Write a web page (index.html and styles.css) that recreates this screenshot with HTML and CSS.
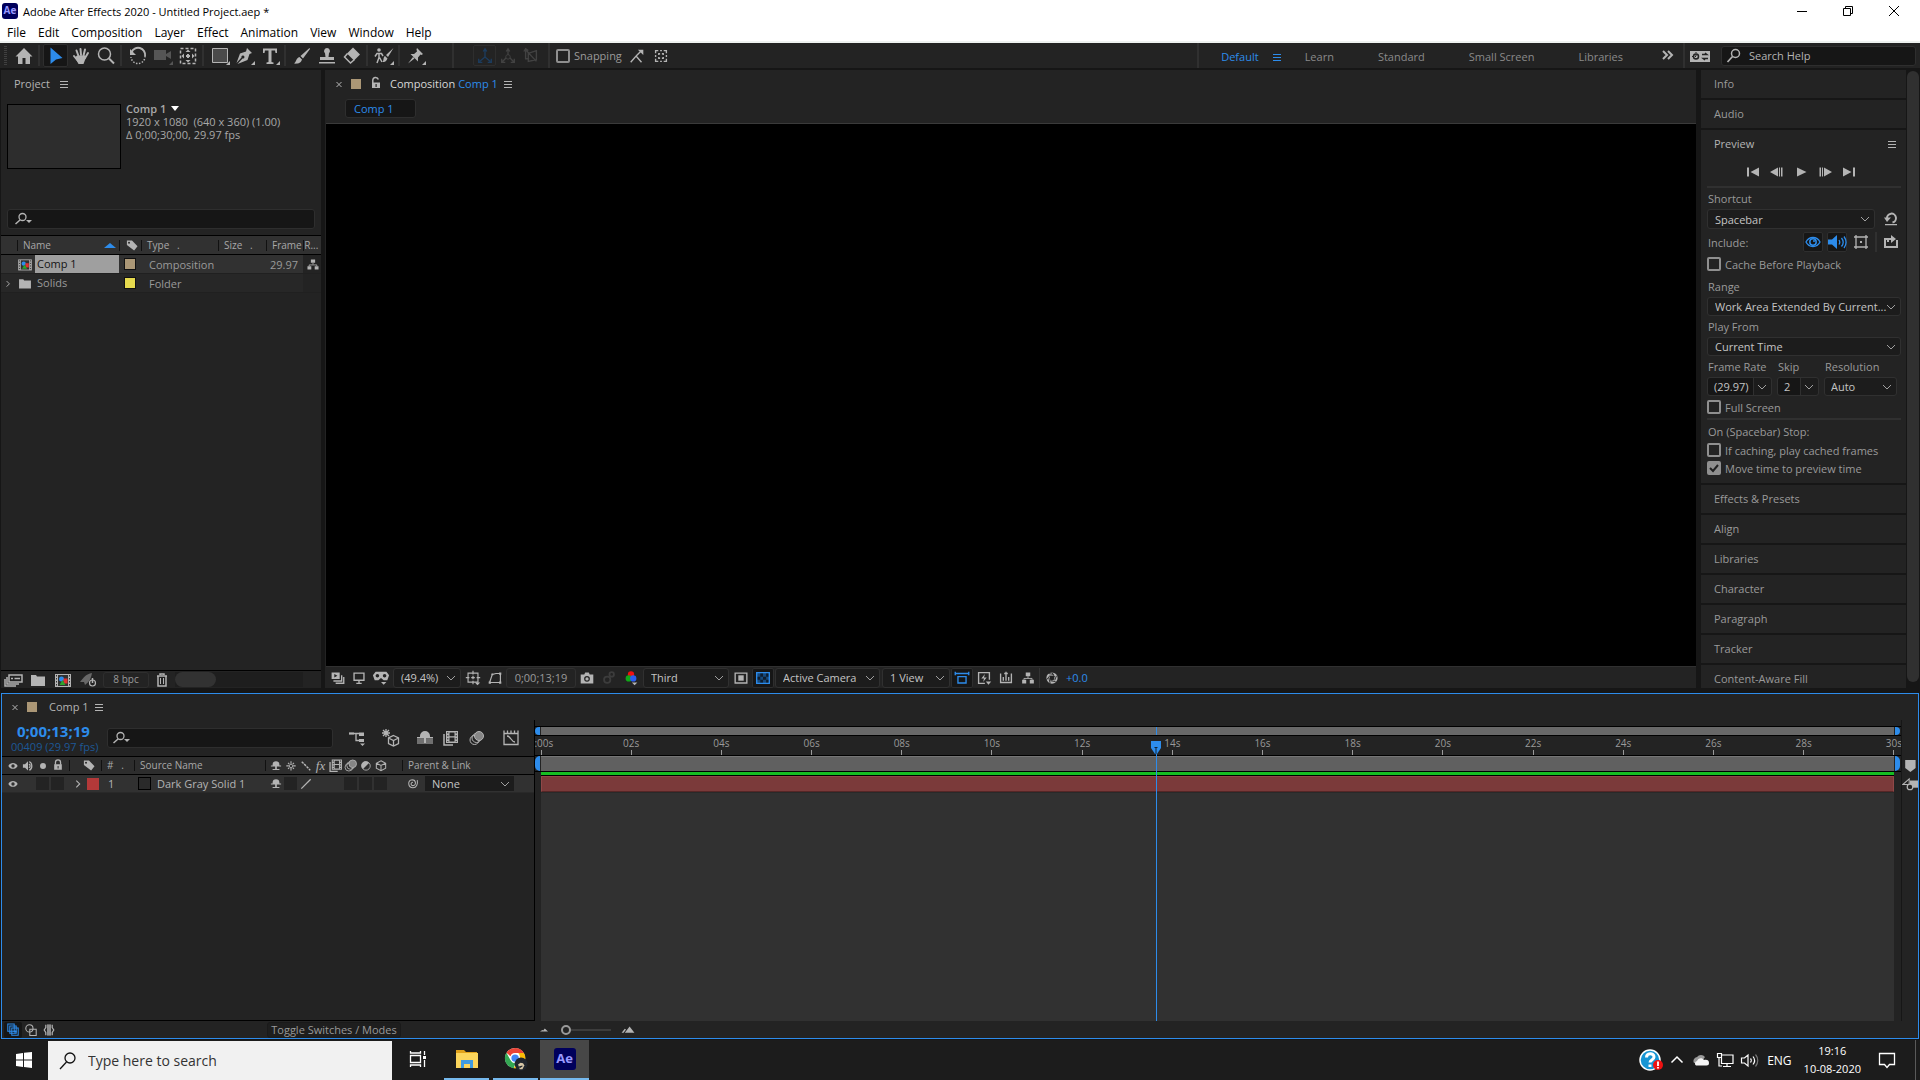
FILE: index.html
```html
<!DOCTYPE html>
<html lang="en">
<head>
    <meta charset="utf-8">
    <title>Adobe After Effects 2020 - Untitled Project.aep *</title>
    <link rel="stylesheet" href="styles.css">
</head>
<body>
    <svg class="sprite" aria-hidden="true">
        <!-- tools -->
        <symbol id="home" viewBox="0 0 20 20"><path fill="currentColor" d="M10 2 1.500 10.500H4V18h4.500v-6h3v6H16v-7.500h2.500z"/></symbol>
        <symbol id="arrow" viewBox="0 0 20 20"><path fill="currentColor" d="M4.500 1.500 16.500 12 10 13.500 4.500 18z"/></symbol>
        <symbol id="hand" viewBox="0 0 20 20"><path fill="none" stroke="currentColor" stroke-width="2" stroke-linecap="round" d="M7.500 10 5.500 4.500M10 9 9.500 3M12.500 9.500 14 3.500M14 12l3-5M3 10l4 5"/><path fill="currentColor" d="M6 9.500h8l1 2-2.500 6.500h-5L4 11.500z"/></symbol>
        <symbol id="zoom" viewBox="0 0 20 20"><circle cx="8.500" cy="8" r="6" fill="none" stroke="currentColor" stroke-width="1.500"/><path stroke="currentColor" stroke-width="2" d="m13 12.500 5 5"/></symbol>
        <symbol id="rotate" viewBox="0 0 20 20"><path fill="none" stroke="currentColor" stroke-width="2" d="M3.500 6.500A7 7 0 0 1 17 10"/><path fill="none" stroke="currentColor" stroke-width="1.500" stroke-dasharray="1.500 1.500" d="M17 10a7 7 0 0 1-14 1"/><path fill="currentColor" d="M2 3v6h6z"/></symbol>
        <symbol id="camera" viewBox="0 0 20 20"><path fill="currentColor" d="M1 4h12v4l5-3v8l-5-3v4H1zM20 15v4h-4z"/></symbol>
        <symbol id="anchor" viewBox="0 0 20 20"><path fill="none" stroke="currentColor" stroke-width="1.500" stroke-dasharray="3 2" d="M2.500 2.500h15v15h-15z"/><path fill="currentColor" d="m10 3.500 2.500 2.500h-5zM10 16.500l2.500-2.500h-5zM3.500 10 6 7.500v5zM16.500 10 14 7.500v5zM9 8h2v1h1v2h-1v1H9v-1H8V9h1z"/></symbol>
        <symbol id="rect" viewBox="0 0 20 20"><path fill="#4a4a4a" stroke="currentColor" d="M2.500 2.500h15v14h-15z"/><path fill="currentColor" d="M20 15v4h-4z"/></symbol>
        <symbol id="pen" viewBox="0 0 20 20"><path fill="currentColor" fill-rule="evenodd" d="m12 2 5 5-2.500 1-2 6L2.500 18l5-5.500a1.500 1.500 0 1 0-1-1L1.500 17 5 7.500l6-2z"/><path fill="currentColor" d="M20 15v4h-4z"/></symbol>
        <symbol id="type" viewBox="0 0 20 20"><path fill="currentColor" d="M3 2.500h14V7h-1.500L15 4.500h-3.500V16l2 .5V18h-7v-1.500l2-.5V4.500H5L4.500 7H3zM20 15v4h-4z"/></symbol>
        <symbol id="brush" viewBox="0 0 20 20"><path fill="currentColor" d="m17.500 2-9 8 2.500 2.500 7-9.500zM7.500 11l2.500 2.500c-1 4-5 4.500-8 4 2.500-1.500 2-5.500 5.500-6.500z"/></symbol>
        <symbol id="stamp" viewBox="0 0 20 20"><path fill="currentColor" d="M10 2a3 3 0 0 1 2 5.200L11.500 11H17v3H3v-3h5.500L8 7.200A3 3 0 0 1 10 2zM2 16h16v1.500H2z"/></symbol>
        <symbol id="eraser" viewBox="0 0 20 20"><path fill="currentColor" d="m11 1.500 7 7-6 6-7-7z"/><path fill="none" stroke="currentColor" stroke-width="1.500" d="m5.500 7.500-3 3.500 6 6 4-3.500"/></symbol>
        <symbol id="roto" viewBox="0 0 20 20"><circle cx="5" cy="4" r="1.800" fill="currentColor"/><path fill="none" stroke="currentColor" stroke-width="1.500" d="M1 10.500 3 7.500h4.500L9 10M5 7v5M5 11.500l-2 5.500M5.500 11.500 8 16"/><path fill="currentColor" d="m19.500 2-7.500 7 2 2zM11 10l2.500 2.500c-1 3-3 3.500-5 3.500 1.500-1.500.5-5 2.500-6zM20 15v4h-4z"/></symbol>
        <symbol id="pin" viewBox="0 0 20 20"><path fill="currentColor" d="m11 2 6 6-1.500 1-1-.5-2.500 3v4L4.500 8H8l3-2.500-.5-2zM7 11l1.500 1.500L2 17.500z"/><path fill="currentColor" d="M20 15v4h-4z"/></symbol>
        <symbol id="axis" viewBox="0 0 20 20"><path fill="none" stroke="currentColor" stroke-width="1.500" d="M10 3v8l-6 5M10 11l6 5M8 5l2-3 2 3M3 13v4h4M17 13v4h-4"/></symbol>
        <symbol id="axis-world" viewBox="0 0 20 20"><path fill="none" stroke="currentColor" stroke-width="1.500" d="M10 3v6M8 12l-4 4M12 12l4 4M8 5l2-3 2 3M3 13v4h4M17 13v4h-4"/><circle cx="10" cy="11" r="2.500" fill="none" stroke="currentColor"/></symbol>
        <symbol id="axis-view" viewBox="0 0 20 20"><path fill="none" stroke="currentColor" stroke-width="1.500" d="M4 3v10h4M4 3l12 13M7 7l9-3v10l-9 2zM2 5l2-3 3 2"/></symbol>
        <symbol id="snap-line" viewBox="0 0 20 20"><path fill="none" stroke="currentColor" stroke-width="1.500" d="m3 17 6-7 6 7M9 10l5-5"/><path fill="currentColor" d="M11 3h6v6z"/></symbol>
        <symbol id="snap-box" viewBox="0 0 20 20"><path fill="none" stroke="currentColor" stroke-width="1.500" d="M4 7V4h3M13 4h3v3M16 13v3h-3M7 16H4v-3M9 4h2M9 16h2M4 9v2M16 9v2"/><path fill="none" stroke="currentColor" stroke-width="1.500" d="M7.500 9V7.500H9M11 7.500h1.500V9M12.500 11v1.500H11M9 12.500H7.500V11"/></symbol>
        <symbol id="menu" viewBox="0 0 20 20"><path stroke="currentColor" d="M6 7.500h8M6 10.500h8M6 13.500h8"/></symbol>
        <symbol id="more" viewBox="0 0 20 20"><path fill="none" stroke="currentColor" stroke-width="2" d="m5 5 4 4-4 4M10 5l4 4-4 4"/></symbol>
        <symbol id="sync" viewBox="0 0 20 20"><path fill="currentColor" d="M0 5h20v11H0z"/><circle cx="6" cy="10.500" r="2.500" fill="none" stroke="#232323" stroke-width="1.500"/><path stroke="#232323" stroke-dasharray="1 2" d="M2 10.500h8M6 6v9"/><path fill="none" stroke="#232323" stroke-width="1.300" d="M12 8.500h5l-2-1.500M18 12.500h-5l2 1.500"/></symbol>
        <symbol id="find" viewBox="0 0 20 20"><circle cx="11.500" cy="7.500" r="4" fill="none" stroke="currentColor" stroke-width="1.500"/><path stroke="currentColor" stroke-width="1.700" d="m8.500 10.500-5 5.500"/></symbol>
        <symbol id="find-menu" viewBox="0 0 20 20"><circle cx="10.500" cy="8" r="3.500" fill="none" stroke="currentColor" stroke-width="1.300"/><path stroke="currentColor" stroke-width="1.500" d="m8 11-4.500 4"/><path fill="currentColor" d="M14 11h6l-3 3z"/></symbol>
        <!-- panel icons -->
        <symbol id="close" viewBox="0 0 20 20"><path stroke="currentColor" d="m7.500 8 5 5M12.500 8l-5 5"/></symbol>
        <symbol id="lock-open" viewBox="0 0 20 20"><path fill="none" stroke="currentColor" stroke-width="1.500" d="M6.800 9V6a2.800 2.800 0 0 1 5.500-.5"/><path fill="currentColor" fill-rule="evenodd" d="M6 8.500h8V14H6zm3.500 1.500v3h1.200v-3z"/></symbol>
        <symbol id="lock" viewBox="0 0 20 20"><path fill="none" stroke="currentColor" stroke-width="1.500" d="M7 9V6.500a3 3 0 0 1 6 0V9"/><path fill="currentColor" fill-rule="evenodd" d="M5.500 8.500h9V15h-9zm4 2v3h1.200v-3z"/></symbol>
        <symbol id="comp" viewBox="0 0 20 20"><path fill="#b4b4b4" d="M2 4h16v13H2z"/><path fill="#303030" d="M5 5h10v11H5z"/><path stroke="#303030" stroke-dasharray="1.500 1.500" d="M3.500 5v11M16.500 5v11"/><circle cx="8.500" cy="9" r="2.500" fill="#2d8ceb"/><path fill="#e03030" d="M10.500 8.500h4v5h-4z"/><path fill="#2ca32c" d="m9.500 10 3 5h-6z"/></symbol>
        <symbol id="folder" viewBox="0 0 20 20"><path fill="currentColor" d="M3 5h5l1 1.500h8V16H3z"/></symbol>
        <symbol id="tag" viewBox="0 0 20 20"><path fill="currentColor" fill-rule="evenodd" d="M4 4h6l6.500 7-4 5L4 9.500zm2.500 1.500a1.200 1.200 0 1 0 0 2.400 1.200 1.200 0 0 0 0-2.400z"/></symbol>
        <symbol id="tree" viewBox="0 0 20 20"><path fill="currentColor" d="M7.500 4h5v4h-5zM3.500 12H8v4H3.500zM12 12h4.500v4H12z"/><path fill="none" stroke="currentColor" d="M10 8v2M5.500 12v-1.500h9V12"/></symbol>
        <symbol id="twirl" viewBox="0 0 20 20"><path fill="none" stroke="currentColor" stroke-width="1.300" d="m8 6.500 4 4-4 4"/></symbol>
        <symbol id="interpret" viewBox="0 0 20 20"><path fill="none" stroke="currentColor" stroke-width="1.500" d="M6 5h13v7H6zM4 7v7h12M2 9v7h11"/><path stroke="currentColor" stroke-width="1.500" d="M8 8.500h2M11.500 8.500H17"/></symbol>
        <symbol id="rocket" viewBox="0 0 20 20"><path fill="#686868" d="M2 12c4-5 6-8 12-9-1 6-3 9-7 12l-1-3z"/><circle cx="14.500" cy="13" r="3" fill="none" stroke="currentColor" stroke-width="1.200"/><path stroke="currentColor" stroke-width="1.500" d="M14.500 8v5"/></symbol>
        <symbol id="trash" viewBox="0 0 20 20"><path fill="none" stroke="currentColor" stroke-width="1.500" d="M5 6h10M6 6v10h8V6M8 5V4h4v1"/><path stroke="currentColor" d="M8.500 8v6M11.500 8v6"/></symbol>
        <!-- viewer footer -->
        <symbol id="preview-stack" viewBox="0 0 20 20"><path fill="currentColor" fill-rule="evenodd" d="M4 4h9v7H4zm3 1.500v4l3.500-2z"/><path fill="none" stroke="currentColor" stroke-width="1.500" d="M6 13.300h9.200V7M8.500 15.800h9V9"/></symbol>
        <symbol id="monitor" viewBox="0 0 20 20"><path fill="none" stroke="currentColor" stroke-width="1.500" d="M4.500 4.500h11v8h-11zM10 13v3M7 16h6"/></symbol>
        <symbol id="goggles" viewBox="0 0 20 20"><path fill="currentColor" fill-rule="evenodd" d="M4 3h12l3 4-2 5.500h-4L10 10l-3 2.500H3L1 7zm2 2.500a2 2 0 1 0 0 4 2 2 0 0 0 0-4zm8 0a2 2 0 1 0 0 4 2 2 0 0 0 0-4zM10 14.500h6L13 17.500z"/></symbol>
        <symbol id="guides" viewBox="0 0 20 20"><path fill="none" stroke="currentColor" stroke-width="1.300" d="M4.500 4.500h11v10h-11zM10 2v4M10 13v4M2 9.500h4M14 9.500h4M8 9.500h4M10 7.500v4"/><path fill="currentColor" d="M12 15h6l-3 3z"/></symbol>
        <symbol id="mask" viewBox="0 0 20 20"><path fill="none" stroke="currentColor" stroke-width="1.300" d="m4 15 3-9 4-1h5v10z"/><path fill="currentColor" d="M3 14h2.500v2.500H3zM14.500 14H17v2.500h-2.500zM14.500 4H17v2.500h-2.500zM6 5h2v2H6z"/></symbol>
        <symbol id="photo" viewBox="0 0 20 20"><path fill="currentColor" fill-rule="evenodd" d="M3 6h4l1-2h4l1 2h4v10H3zm7 1.700a3.200 3.200 0 1 0 0 6.400 3.200 3.200 0 0 0 0-6.400z"/><circle cx="10" cy="11" r="1.800" fill="currentColor"/></symbol>
        <symbol id="ghost" viewBox="0 0 20 20"><circle cx="8" cy="12" r="3.500" fill="none" stroke="currentColor" stroke-width="2"/><circle cx="13" cy="6" r="2.500" fill="none" stroke="currentColor" stroke-width="2"/></symbol>
        <symbol id="rgb" viewBox="0 0 20 20"><circle cx="10" cy="6" r="3.500" fill="#f01010"/><circle cx="7.500" cy="10.500" r="3.500" fill="#10a818"/><circle cx="12.500" cy="10.500" r="3.500" fill="#2a5cf0"/><path fill="#b4b4b4" d="M11 15h6l-3 3z"/></symbol>
        <symbol id="roi" viewBox="0 0 20 20"><path fill="none" stroke="currentColor" stroke-width="1.500" d="M3.500 4.500h13v11h-13z"/><path fill="currentColor" d="M7 7h6v6H7z"/></symbol>
        <symbol id="checker" viewBox="0 0 20 20"><path fill="#16497c" stroke="#2d8ceb" stroke-width="1.500" d="M3 4h14v12H3z"/><path fill="#0e1c2c" d="M7 5h3v3.500H7zM13.500 5H16v3.500h-2.500zM4 8.500h3V12H4zM10 8.500h3.500V12H10zM7 12h3v3H7zM13.500 12H16v3h-2.500z"/></symbol>
        <symbol id="aspect" viewBox="0 0 20 20"><path fill="none" stroke="currentColor" stroke-width="1.500" d="M5.500 8.500h9v7h-9zM2 5h16M2.500 3v4M17.500 3v4"/></symbol>
        <symbol id="fast" viewBox="0 0 20 20"><path fill="none" stroke="currentColor" stroke-width="1.500" d="M16 12V4H4v12h7"/><path fill="currentColor" d="m11 5.500-4 5h3l-1 4 4-5h-3zM12 14h6l-3 3.500z"/></symbol>
        <symbol id="chart" viewBox="0 0 20 20"><path fill="none" stroke="currentColor" stroke-width="1.500" d="M4 5v10h12V5M7 13V9M10 13V3M13 13V9M8 5h4"/></symbol>
        <symbol id="aperture" viewBox="0 0 20 20"><circle cx="10" cy="10" r="4.500" fill="none" stroke="currentColor" stroke-width="3.500"/><path stroke="#232323" d="m10 4 3 5M15 7.500l-2 5M14 14l-6-1M8 16l-1.500-6M4 12l4-5M6 5l6 1"/></symbol>
        <!-- preview panel -->
        <symbol id="first" viewBox="0 0 20 20"><path fill="currentColor" d="M4 5.500h2v9H4zM16 5.500v9l-8.500-4.500z"/></symbol>
        <symbol id="prev" viewBox="0 0 20 20"><path fill="currentColor" d="M11 5.500v9L3 10zM12 5.500h1v9h-1zM14 5.500h1.500v9H14z"/></symbol>
        <symbol id="play" viewBox="0 0 20 20"><path fill="currentColor" d="M6 5.500 15.500 10 6 14.500z"/></symbol>
        <symbol id="next" viewBox="0 0 20 20"><path fill="currentColor" d="M9 5.500v9l8-4.500zM4.500 5.500H6v9H4.500zM7 5.500h1v9H7z"/></symbol>
        <symbol id="last" viewBox="0 0 20 20"><path fill="currentColor" d="M14 5.500h2v9h-2zM4 5.500v9l8.500-4.500z"/></symbol>
        <symbol id="undo" viewBox="0 0 20 20"><path fill="none" stroke="currentColor" stroke-width="2" d="M6 9.500a4.500 4.500 0 1 1 5.500 4"/><path fill="currentColor" d="M3 8.500h7L6 13zM4 15h12v1.300H4z"/></symbol>
        <symbol id="eye-o" viewBox="0 0 20 20"><path fill="none" stroke="currentColor" stroke-width="1.300" d="M3 10c3-6 11-6 14 0-3 6-11 6-14 0z"/><circle cx="10" cy="10" r="3.200" fill="none" stroke="currentColor" stroke-width="1.500"/><circle cx="11" cy="9" r="1" fill="currentColor"/></symbol>
        <symbol id="sound" viewBox="0 0 20 20"><path fill="currentColor" d="M1 7.500h4L10 3v14l-5-4.500H1z"/><path fill="none" stroke="currentColor" stroke-width="1.300" d="M12 8c1 1.500 1 3 0 4.500M14.500 6c2 2.500 2 6 0 8.500M17 4.500c2.500 3.500 2.500 8 0 11.500"/></symbol>
        <symbol id="overlay" viewBox="0 0 20 20"><path fill="none" stroke="currentColor" stroke-width="1.300" d="M5 3v14M15 3v14M3 5h14M3 15h14"/><path fill="currentColor" d="M9 9h2v2H9z"/></symbol>
        <symbol id="loop" viewBox="0 0 20 20"><path fill="none" stroke="currentColor" stroke-width="2" d="M6 7H4v8h12V8"/><path fill="none" stroke="currentColor" stroke-width="2" d="M7 10V7h4"/><path fill="currentColor" d="m10 3 5 4-5 4z"/></symbol>
        <!-- timeline -->
        <symbol id="flow" viewBox="0 0 20 20"><path fill="none" stroke="currentColor" stroke-width="1.300" d="M2 5.500h10M9 6v6.500h4"/><path fill="currentColor" d="M2 4.500h5v2H2zM12 4.500h5V8h-5zM12 11h5v3h-5zM13 15.500h5L15.500 18z"/></symbol>
        <symbol id="draft3d" viewBox="0 0 20 20"><path fill="none" stroke="currentColor" stroke-width="1.300" d="m12.500 7.500 5 2.500v5.500l-5 2.500-5-2.500V10zM7.500 10l5 2.500 5-2.500M12.500 12.500V18M5 1v8M1 5h8M2 2l6 6M8 2 2 8"/></symbol>
        <symbol id="shy-all" viewBox="0 0 20 20"><path fill="#707070" d="M2 11h16v5H2z"/><path fill="currentColor" d="M5 8a5 5 0 0 1 10 0v1h3v1.500H2V9h3zM9 9.500h2V15H9z"/></symbol>
        <symbol id="blend" viewBox="0 0 20 20"><path fill="none" stroke="currentColor" stroke-width="1.500" d="M3 6v11h9"/><path fill="currentColor" fill-rule="evenodd" d="M5 3h12v12H5zm3.500 1.500v3.700h5V4.500zm0 5v4h5v-4z"/><path stroke="#2a2a2a" stroke-dasharray="1.500 1.500" d="M6.800 4v10M15.200 4v10"/></symbol>
        <symbol id="blur" viewBox="0 0 20 20"><circle cx="7.500" cy="12" r="4.500" fill="none" stroke="currentColor"/><circle cx="9.500" cy="10" r="4.500" fill="none" stroke="currentColor"/><circle cx="12" cy="8" r="4.500" fill="#858585" stroke="currentColor"/></symbol>
        <symbol id="graph" viewBox="0 0 20 20"><path fill="none" stroke="currentColor" stroke-width="1.300" d="M3 5.500h14v11H3zM3 2.500v3M6.500 2.500v3M10 2.500v3M13.500 2.500v3M17 2.500v3M6 8c4 0 4 6 8 6"/></symbol>
        <symbol id="eye" viewBox="0 0 20 20"><path fill="currentColor" fill-rule="evenodd" d="M4.500 10.500c2.500-4.500 8.500-4.500 11 0-2.500 4.500-8.500 4.500-11 0zm5.500-2a2 2 0 1 0 0 4 2 2 0 0 0 0-4z"/></symbol>
        <symbol id="audio" viewBox="0 0 20 20"><path fill="currentColor" d="M4 8.500h2.500L10 5v11l-3.500-3.500H4z"/><path fill="none" stroke="currentColor" stroke-width="1.500" d="M11.500 5.500c4 1.500 4 8.500 0 10M11 8.500c2 .5 2 3.500 0 4"/></symbol>
        <symbol id="dot" viewBox="0 0 20 20"><circle cx="10" cy="10.500" r="3.500" fill="currentColor"/></symbol>
        <symbol id="shy" viewBox="0 0 20 20"><path fill="currentColor" d="M6 9a4 4 0 0 1 8 0v1h2v1.300h-5V14h3v1.300H6V14h3v-2.700H4V10h2z"/></symbol>
        <symbol id="sun" viewBox="0 0 20 20"><path stroke="currentColor" stroke-width="1.300" d="M10 5v3M10 13v3M4.500 10.500h3M12.500 10.500h3M6.500 7 8 8.500M12 12.500l1.500 1.500M13.500 7 12 8.500M8 12.500 6.500 14"/><circle cx="10" cy="10.500" r="2" fill="none" stroke="currentColor"/></symbol>
        <symbol id="quality" viewBox="0 0 20 20"><path stroke="currentColor" stroke-width="1.700" stroke-dasharray="3 1" d="m5 5.500 10 10"/></symbol>
        <symbol id="best" viewBox="0 0 20 20"><path stroke="currentColor" stroke-width="1.500" d="m4.500 16 11-11"/></symbol>
        <symbol id="half" viewBox="0 0 20 20"><circle cx="10" cy="10.500" r="5" fill="none" stroke="currentColor"/><path fill="currentColor" d="M13.500 7a5 5 0 1 0-7 7z"/></symbol>
        <symbol id="cube" viewBox="0 0 20 20"><path fill="none" stroke="currentColor" stroke-width="1.200" d="m10 4.500 5.500 2.800v6L10 16l-5.500-2.700v-6zM4.500 7.300 10 10l5.500-2.700M10 10v6"/></symbol>
        <symbol id="whip" viewBox="0 0 20 20"><path fill="none" stroke="currentColor" stroke-width="1.200" d="M15 6c1 5-1 9-5 9-6 0-7-9-1-9.500 5 0 5 7 1 7-3 0-3-4 0-4"/></symbol>
        <symbol id="marker" viewBox="0 0 20 20"><path fill="currentColor" d="M4 3h13v10l-6.500 5L4 13z"/></symbol>
        <symbol id="comp-marker" viewBox="0 0 20 20"><path fill="currentColor" d="M10 5h10v9H10z"/><path fill="#232323" stroke="currentColor" stroke-width="1.300" d="M9 3 1 10h8z"/><circle cx="10" cy="13" r="3.500" fill="#232323" stroke="currentColor" stroke-width="1.500"/></symbol>
        <symbol id="pane-switch" viewBox="0 0 20 20"><path fill="#161616" stroke="currentColor" stroke-width="1.300" d="M3.500 2.500h8v9h-8zM6 5h8v9H6zM8.500 7.500h8v9h-8z"/><path stroke="currentColor" stroke-width="1.300" d="M10.500 12h4M12.500 10v4"/></symbol>
        <symbol id="pane-mode" viewBox="0 0 20 20"><circle cx="8" cy="8" r="4.500" fill="none" stroke="currentColor" stroke-width="1.300"/><path fill="none" stroke="currentColor" stroke-width="1.300" d="M8.500 9h8v8h-8z"/></symbol>
        <symbol id="pane-inout" viewBox="0 0 20 20"><path fill="#8f8f8f" d="M7.500 3h5v14h-5z"/><path fill="none" stroke="currentColor" stroke-width="1.500" d="M6 3.500v3.500L4 10l2 3v3.500M14 3.500v3.500l2 3-2 3v3.500"/></symbol>
        <symbol id="hill" viewBox="0 0 20 20"><path fill="currentColor" d="m5 12 3-2 1 .5L11 8l4 4z"/></symbol>
        <symbol id="hills" viewBox="0 0 20 20"><path fill="currentColor" d="m6 13.500 6-8 6 8zM2 13.500l4-5 1.500 1-3 4z"/></symbol>
        <!-- desktop -->
        <symbol id="win-min" viewBox="0 0 20 20"><path stroke="currentColor" d="M5 10.500h10"/></symbol>
        <symbol id="win-restore" viewBox="0 0 20 20"><path fill="none" stroke="currentColor" d="M5.500 7.500h7v7h-7zM7.500 7.500v-2h7v7h-2"/></symbol>
        <symbol id="win-close" viewBox="0 0 20 20"><path stroke="currentColor" d="m5 5 10 10M15 5 5 15"/></symbol>
        <symbol id="windows" viewBox="0 0 20 20"><path fill="currentColor" d="m2 4 7-1v6.500H2zM10 2.800 18 2v7.500h-8zM2 10.500h7V17l-7-1zM10 10.500h8V18l-8-1z"/></symbol>
        <symbol id="lens" viewBox="0 0 20 20"><circle cx="12" cy="7" r="5" fill="none" stroke="currentColor" stroke-width="1.300"/><path stroke="currentColor" stroke-width="1.300" d="m8.500 11-6.500 7"/></symbol>
        <symbol id="taskview" viewBox="0 0 20 20"><path fill="none" stroke="currentColor" stroke-width="1.300" d="M2.500 6.500h10v7h-10zM2.500 2v2h10V2M2.500 18v-2h10v2M16.500 2v4M16.500 11v7"/><path fill="currentColor" d="M15 7h3v3h-3z"/></symbol>
        <symbol id="explorer" viewBox="0 0 24 24"><path fill="#e0a21b" d="M1 3h8l2 2h11v6H1z"/><path fill="#fbd55c" d="M1 6h22v15H1z"/><path fill="#3f9be0" d="M6 13h12v8h-3v-4H9v4H6z"/></symbol>
        <symbol id="chrome" viewBox="0 0 26 26"><circle cx="12" cy="12" r="11" fill="#fff"/><path fill="#ea4335" d="M12 1a11 11 0 0 1 9.500 5.500H12a5.500 5.500 0 0 0-5 3.500L2.600 6.300A11 11 0 0 1 12 1z"/><path fill="#34a853" d="M2.600 6.300 7.300 14.700A5.500 5.500 0 0 0 12.500 17.500L10.500 23A11 11 0 0 1 2.600 6.300z"/><path fill="#fbbc05" d="M21.500 6.500A11 11 0 0 1 10.500 23l5-8.500a5.500 5.500 0 0 0 0-8z"/><circle cx="12" cy="12" r="5" fill="#fff"/><circle cx="12" cy="12" r="4" fill="#4285f4"/><circle cx="18.500" cy="18.500" r="7" fill="#20262e"/><path fill="#d8c8a8" d="m15 18 3-3 2 1 2 4-2 4h-3z"/><path fill="#20262e" d="m14 15 5-1 3 4-4-1-3 2zM16 21l4-1v1l-3 2z"/></symbol>
        <symbol id="cloud" viewBox="0 0 20 20"><path fill="#9b9b9b" d="M3 13a4 4 0 0 1 3-6 5 5 0 0 1 8 0l-5 7z"/><path fill="#f5f5f5" d="M5 15.500a2.500 2.500 0 0 1 1-4.500c1-3 5-4 7-1 3-.5 5 0 5 3a2.500 2.500 0 0 1-2.500 2.500z"/></symbol>
        <symbol id="network" viewBox="0 0 20 20"><path fill="none" stroke="currentColor" stroke-width="1.200" d="M7 5h11v8.500H6.500V8M12 13.500v3M8 16.500h8M4 8v8h3M2.500 3.500h4v4h-4z"/></symbol>
        <symbol id="volume" viewBox="0 0 20 20"><path fill="none" stroke="currentColor" stroke-width="1.200" d="M2.500 8h3L9 5v11l-3.500-3h-3zM11.500 8.500c1 1 1 3 0 4M14 6.500c2 2.500 2 5.500 0 8"/><path fill="none" stroke="#777" stroke-width="1.200" d="M16.500 4.500c3 3.500 3 8.500 0 12"/></symbol>
        <symbol id="chevron" viewBox="0 0 20 20"><path fill="none" stroke="currentColor" stroke-width="1.500" d="m4.500 12.500 5.500-5.500 5.500 5.500"/></symbol>
        <symbol id="notice" viewBox="0 0 20 20"><path fill="none" stroke="currentColor" stroke-width="1.300" d="M2.500 3.500h15v11h-5l-2.500 3-2.500-3h-5z"/></symbol>
        <symbol id="alert" viewBox="0 0 24 24"><circle cx="11" cy="12" r="10" fill="#1795d4" stroke="#fff" stroke-width="1.500"/><path fill="none" stroke="#fff" stroke-width="3" d="M7.500 9.500c0-5 7.500-5 7.500-.5 0 3-4 3-4 5.500M11 16.500v2.500"/><circle cx="19" cy="17" r="5" fill="#ee1111"/><path stroke="#fff" stroke-width="1.800" d="M19 13.500v4.500M19 19v1.500"/></symbol>
    </svg>

    <header class="titlebar">
        <span class="app-logo">Ae</span>
        <span>Adobe After Effects 2020 - Untitled Project.aep *</span>
        <div class="window-buttons">
            <button aria-label="Minimize"><svg><use href="#win-min"/></svg></button>
            <button aria-label="Restore"><svg><use href="#win-restore"/></svg></button>
            <button aria-label="Close"><svg><use href="#win-close"/></svg></button>
        </div>
    </header>
    <nav class="menubar">
        <a href="#">File</a><a href="#">Edit</a><a href="#">Composition</a><a href="#">Layer</a><a href="#">Effect</a><a href="#">Animation</a><a href="#">View</a><a href="#">Window</a><a href="#">Help</a>
    </nav>

    <div class="toolbar">
        <div class="tools">
            <span class="grip"></span>
            <button aria-label="Home"><svg><use href="#home"/></svg></button>
            <i></i>
            <button class="active" aria-label="Selection"><svg><use href="#arrow"/></svg></button>
            <button aria-label="Hand"><svg><use href="#hand"/></svg></button>
            <button aria-label="Zoom"><svg><use href="#zoom"/></svg></button>
            <i></i>
            <button aria-label="Rotation"><svg><use href="#rotate"/></svg></button>
            <button class="dim" aria-label="Camera"><svg><use href="#camera"/></svg></button>
            <button aria-label="Pan Behind"><svg><use href="#anchor"/></svg></button>
            <i></i>
            <button aria-label="Rectangle"><svg><use href="#rect"/></svg></button>
            <button aria-label="Pen"><svg><use href="#pen"/></svg></button>
            <button aria-label="Type"><svg><use href="#type"/></svg></button>
            <i></i>
            <button aria-label="Brush"><svg><use href="#brush"/></svg></button>
            <button aria-label="Clone Stamp"><svg><use href="#stamp"/></svg></button>
            <button aria-label="Eraser"><svg><use href="#eraser"/></svg></button>
            <i></i>
            <button aria-label="Roto Brush"><svg><use href="#roto"/></svg></button>
            <i></i>
            <button aria-label="Puppet Pin"><svg><use href="#pin"/></svg></button>
        </div>
        <div class="axes">
            <button class="active" aria-label="Local Axis"><svg><use href="#axis"/></svg></button>
            <button aria-label="World Axis"><svg><use href="#axis-world"/></svg></button>
            <button aria-label="View Axis"><svg><use href="#axis-view"/></svg></button>
        </div>
        <div class="snapping">
            <label class="check"><input type="checkbox"> Snapping</label>
            <button aria-label="Snap to Edges"><svg><use href="#snap-line"/></svg></button>
            <button aria-label="Snap to Features"><svg><use href="#snap-box"/></svg></button>
        </div>
        <nav class="workspaces">
            <a class="current" href="#">Default <svg><use href="#menu"/></svg></a>
            <a href="#">Learn</a>
            <a href="#">Standard</a>
            <a href="#">Small Screen</a>
            <a href="#">Libraries</a>
            <button aria-label="More workspaces"><svg><use href="#more"/></svg></button>
        </nav>
        <div class="help">
            <button aria-label="Sync Settings"><svg><use href="#sync"/></svg></button>
            <label class="search"><svg><use href="#find"/></svg><input type="text" aria-label="Search Help" placeholder="Search Help"></label>
        </div>
    </div>

    <main class="docks">
        <section class="panel project">
            <h2>Project <svg><use href="#menu"/></svg></h2>
            <div class="item-info">
                <div class="thumb"></div>
                <p><b>Comp 1 <span class="caret"></span></b>
                1920 x 1080&nbsp; (640 x 360) (1.00)<br>
                Δ 0;00;30;00, 29.97 fps</p>
            </div>
            <label class="search"><svg><use href="#find-menu"/></svg><input type="text" aria-label="Search project"></label>
            <table class="items">
                <colgroup><col class="c-name"><col class="c-tag"><col class="c-type"><col class="c-size"><col class="c-rate"><col></colgroup>
                <thead>
                    <tr><th class="name">Name <span class="sort"></span></th><th><svg><use href="#tag"/></svg></th><th>Type &nbsp; .</th><th>Size &nbsp; .</th><th>Frame R...</th><th></th></tr>
                </thead>
                <tbody>
                    <tr class="selected">
                        <td><div class="cell"><span class="indent"></span><svg><use href="#comp"/></svg><span class="item-name">Comp 1</span></div></td>
                        <td><span class="swatch tan"></span></td><td>Composition</td><td></td><td class="num">29.97</td><td class="end"><svg><use href="#tree"/></svg></td>
                    </tr>
                    <tr>
                        <td><div class="cell"><svg class="twirl"><use href="#twirl"/></svg><svg><use href="#folder"/></svg><span class="item-name">Solids</span></div></td>
                        <td><span class="swatch yellow"></span></td><td>Folder</td><td></td><td></td><td class="end"></td>
                    </tr>
                </tbody>
            </table>
            <div class="project-bar">
                <button aria-label="Interpret Footage"><svg><use href="#interpret"/></svg></button>
                <button aria-label="New Folder"><svg><use href="#folder"/></svg></button>
                <button aria-label="New Composition"><svg><use href="#comp"/></svg></button>
                <button aria-label="Project Settings"><svg><use href="#rocket"/></svg></button>
                <button class="depth">8 bpc</button>
                <button class="delete" aria-label="Delete"><svg><use href="#trash"/></svg></button>
                <div class="hscroll"><span></span></div>
            </div>
        </section>

        <section class="panel viewer">
            <h2><svg><use href="#close"/></svg><span class="swatch tan"></span><svg><use href="#lock-open"/></svg><strong>Composition</strong> <em>Comp 1</em><svg><use href="#menu"/></svg></h2>
            <a class="crumb" href="#">Comp 1</a>
            <div class="canvas"></div>
            <div class="viewer-bar">
                <button aria-label="Always Preview"><svg><use href="#preview-stack"/></svg></button>
                <button aria-label="Primary Viewer"><svg><use href="#monitor"/></svg></button>
                <button aria-label="Adaptive Preview"><svg><use href="#goggles"/></svg></button>
                <select class="w-zoom" aria-label="Magnification"><option>(49.4%)</option></select>
                <button aria-label="Guides"><svg><use href="#guides"/></svg></button>
                <button aria-label="Mask Visibility"><svg><use href="#mask"/></svg></button>
                <button class="timecode">0;00;13;19</button>
                <button aria-label="Take Snapshot"><svg><use href="#photo"/></svg></button>
                <button class="faint" aria-label="Show Snapshot"><svg><use href="#ghost"/></svg></button>
                <button aria-label="Channels"><svg><use href="#rgb"/></svg></button>
                <select class="w-res" aria-label="Resolution"><option>Third</option></select>
                <button aria-label="Region of Interest"><svg><use href="#roi"/></svg></button>
                <button class="active" aria-label="Transparency Grid"><svg><use href="#checker"/></svg></button>
                <select class="w-cam" aria-label="3D View"><option>Active Camera</option></select>
                <select class="w-view" aria-label="View Layout"><option>1 View</option></select>
                <button class="active" aria-label="Pixel Aspect Ratio"><svg><use href="#aspect"/></svg></button>
                <button aria-label="Fast Previews"><svg><use href="#fast"/></svg></button>
                <button aria-label="Timeline"><svg><use href="#chart"/></svg></button>
                <button aria-label="Flowchart"><svg><use href="#tree"/></svg></button>
                <button class="exposure" aria-label="Reset Exposure"><svg><use href="#aperture"/></svg></button>
                <em>+0.0</em>
            </div>
        </section>

        <div class="side">
            <div class="side-panels">
                <section class="panel"><h3>Info</h3></section>
                <section class="panel"><h3>Audio</h3></section>
                <section class="panel preview">
                    <h3 class="open">Preview <svg><use href="#menu"/></svg></h3>
                    <div class="transport">
                        <button aria-label="First Frame"><svg><use href="#first"/></svg></button>
                        <button aria-label="Previous Frame"><svg><use href="#prev"/></svg></button>
                        <button aria-label="Play"><svg><use href="#play"/></svg></button>
                        <button aria-label="Next Frame"><svg><use href="#next"/></svg></button>
                        <button aria-label="Last Frame"><svg><use href="#last"/></svg></button>
                    </div>
                    <label for="shortcut">Shortcut</label>
                    <div class="row">
                        <select id="shortcut"><option>Spacebar</option></select>
                        <button aria-label="Reset"><svg><use href="#undo"/></svg></button>
                    </div>
                    <div class="row include">
                        <span>Include:</span>
                        <button class="active" aria-label="Video"><svg><use href="#eye-o"/></svg></button>
                        <button class="active" aria-label="Audio"><svg><use href="#sound"/></svg></button>
                        <button aria-label="Overlays"><svg><use href="#overlay"/></svg></button>
                        <button class="loop" aria-label="Loop"><svg><use href="#loop"/></svg></button>
                    </div>
                    <label class="check"><input type="checkbox"> Cache Before Playback</label>
                    <label class="spaced" for="range">Range</label>
                    <select id="range"><option>Work Area Extended By Current...</option></select>
                    <label for="from">Play From</label>
                    <select id="from"><option>Current Time</option></select>
                    <div class="rates">
                        <label for="rate">Frame Rate</label><label for="skip">Skip</label><label for="res">Resolution</label>
                        <select class="combo" id="rate"><option>(29.97)</option></select>
                        <select class="combo" id="skip"><option>2</option></select>
                        <select id="res"><option>Auto</option></select>
                    </div>
                    <label class="check"><input type="checkbox"> Full Screen</label>
                    <div class="stop">On (Spacebar) Stop:</div>
                    <label class="check"><input type="checkbox"> If caching, play cached frames</label>
                    <label class="check"><input type="checkbox" checked> Move time to preview time</label>
                </section>
                <section class="panel"><h3>Effects &amp; Presets</h3></section>
                <section class="panel"><h3>Align</h3></section>
                <section class="panel"><h3>Libraries</h3></section>
                <section class="panel"><h3>Character</h3></section>
                <section class="panel"><h3>Paragraph</h3></section>
                <section class="panel"><h3>Tracker</h3></section>
                <section class="panel"><h3>Content-Aware Fill</h3></section>
            </div>
            <div class="vscroll"></div>
        </div>
    </main>

    <section class="timeline">
        <h2><svg><use href="#close"/></svg><span class="swatch tan"></span>Comp 1<svg><use href="#menu"/></svg></h2>
        <div class="time-body">
            <div class="layers">
                <div class="time-controls">
                    <p class="clock"><b>0;00;13;19</b>00409 (29.97 fps)</p>
                    <label class="search"><svg><use href="#find-menu"/></svg><input type="text" aria-label="Search layers"></label>
                    <button aria-label="Mini-Flowchart"><svg><use href="#flow"/></svg></button>
                    <button aria-label="Draft 3D"><svg><use href="#draft3d"/></svg></button>
                    <span class="trio">
                        <button aria-label="Hide Shy Layers"><svg><use href="#shy-all"/></svg></button>
                        <button aria-label="Frame Blending"><svg><use href="#blend"/></svg></button>
                        <button aria-label="Motion Blur"><svg><use href="#blur"/></svg></button>
                    </span>
                    <button aria-label="Graph Editor"><svg><use href="#graph"/></svg></button>
                </div>
                <table class="layer-table">
                    <colgroup><col class="l-av"><col class="l-tag"><col class="l-num"><col class="l-source"><col class="l-switch"><col></colgroup>
                    <thead>
                        <tr>
                            <th><div class="slots"><svg><use href="#eye"/></svg><svg><use href="#audio"/></svg><svg><use href="#dot"/></svg><svg><use href="#lock"/></svg></div></th>
                            <th class="tag"><svg><use href="#tag"/></svg></th>
                            <th>#&nbsp; &nbsp;.</th>
                            <th>Source Name</th>
                            <th><div class="slots"><svg><use href="#shy"/></svg><svg><use href="#sun"/></svg><svg><use href="#quality"/></svg><span class="fx">fx</span><svg><use href="#blend"/></svg><svg><use href="#blur"/></svg><svg><use href="#half"/></svg><svg><use href="#cube"/></svg></div></th>
                            <th>Parent &amp; Link</th>
                        </tr>
                    </thead>
                    <tbody>
                        <tr>
                            <td><div class="slots"><svg><use href="#eye"/></svg><span></span><span class="off"></span><span class="off"></span></div></td>
                            <td><div class="cell"><svg><use href="#twirl"/></svg><span class="swatch red"></span></div></td>
                            <td class="index">1</td>
                            <td><div class="cell layer-name"><span class="solid"></span>Dark Gray Solid 1</div></td>
                            <td><div class="slots"><svg><use href="#shy"/></svg><span class="off"></span><svg><use href="#best"/></svg><span></span><span></span><span class="off"></span><span class="off"></span><span class="off"></span></div></td>
                            <td><div class="cell parent"><svg><use href="#whip"/></svg><select aria-label="Parent layer"><option>None</option></select></div></td>
                        </tr>
                    </tbody>
                </table>
            </div>
            <div class="tracks">
                <div class="navigator"><span class="handle"></span><div></div><span class="handle right"></span></div>
                <ol class="ruler">
                    <li>0:00s</li><li>02s</li><li>04s</li><li>06s</li><li>08s</li><li>10s</li><li>12s</li><li>14s</li><li>16s</li><li>18s</li><li>20s</li><li>22s</li><li>24s</li><li>26s</li><li>28s</li><li>30s</li>
                </ol>
                <div class="workarea"><span class="handle"></span><div></div><span class="handle right"></span></div>
                <div class="cached"><div></div></div>
                <div class="layer-bar"><div></div></div>
                <div class="track-empty"></div>
                <div class="scrub">
                    <div class="playhead" style="left: 45.450%"><svg viewBox="0 0 12 13"><path fill="#2d8ceb" d="M1 0h10v7l-4 6H5L1 7z"/><path stroke="#123" d="M4.500 6.500h3M6 7v6"/></svg></div>
                </div>
            </div>
            <div class="gutter">
                <svg><use href="#marker"/></svg>
                <svg><use href="#comp-marker"/></svg>
            </div>
        </div>
        <footer class="time-footer">
            <button class="active" aria-label="Layer Switches"><svg><use href="#pane-switch"/></svg></button>
            <button aria-label="Transfer Controls"><svg><use href="#pane-mode"/></svg></button>
            <button aria-label="In and Out"><svg><use href="#pane-inout"/></svg></button>
            <button class="toggle">Toggle Switches / Modes</button>
            <div class="time-zoom">
                <svg><use href="#hill"/></svg>
                <input type="range" aria-label="Time zoom" value="0">
                <svg><use href="#hills"/></svg>
            </div>
        </footer>
    </section>

    <footer class="taskbar">
        <button class="start" aria-label="Start"><svg><use href="#windows"/></svg></button>
        <label class="task-search"><svg><use href="#lens"/></svg><input type="text" aria-label="Type here to search" placeholder="Type here to search"></label>
        <button class="task" aria-label="Task View"><svg><use href="#taskview"/></svg></button>
        <button class="task running" aria-label="File Explorer"><svg class="big"><use href="#explorer"/></svg></button>
        <button class="task running" aria-label="Chrome"><svg class="big"><use href="#chrome"/></svg></button>
        <button class="task current"><span class="app-logo">Ae</span></button>
        <div class="tray">
            <svg class="big"><use href="#alert"/></svg>
            <svg><use href="#chevron"/></svg>
            <svg><use href="#cloud"/></svg>
            <svg><use href="#network"/></svg>
            <svg><use href="#volume"/></svg>
            <span>ENG</span>
            <time>19:16<br>10-08-2020</time>
            <button aria-label="Notifications"><svg><use href="#notice"/></svg></button>
        </div>
    </footer>
</body>
</html>
```
FILE: styles.css
```css
* {
    box-sizing: border-box;
}

:root {
    --chevron: url("data:image/svg+xml,%3Csvg xmlns='http://www.w3.org/2000/svg' width='10' height='6'%3E%3Cpath d='M1 1l4 4 4-4' fill='none' stroke='%23a0a0a0'/%3E%3C/svg%3E");
}

body {
    margin: 0;
    height: 100vh;
    display: flex;
    flex-direction: column;
    overflow: hidden;
    background: #161616;
    color: #9a9a9a;
    font: 11px/13px "Open Sans", sans-serif;
}

.sprite {
    display: none;
}

svg {
    width: 20px;
    height: 20px;
    flex: none;
    display: block;
    color: #b4b4b4;
}

button, input, select {
    font: inherit;
    color: inherit;
    background: none;
    border: 0;
    padding: 0;
    margin: 0;
    min-width: 0;
}

button {
    display: flex;
    align-items: center;
    justify-content: center;
    flex: none;
}

a {
    color: inherit;
    text-decoration: none;
}

h2, h3, p, ol {
    margin: 0;
    padding: 0;
    font-size: 11px;
    font-weight: normal;
    list-style: none;
}

em {
    font-style: normal;
    color: #2d8ceb;
}

select {
    appearance: none;
    height: 20px;
    padding: 0 7px;
    border: 1px solid #303030;
    border-radius: 3px;
    color: #c4c4c4;
    background: #1c1c1c var(--chevron) no-repeat right 4px center;
}

input[type="checkbox"] {
    appearance: none;
    width: 14px;
    height: 14px;
    border: 2px solid #8f8f8f;
    border-radius: 2px;
}

input[type="checkbox"]:checked {
    background: #8f8f8f url("data:image/svg+xml,%3Csvg xmlns='http://www.w3.org/2000/svg' width='10' height='10'%3E%3Cpath d='M1 5l3 3 5-6' fill='none' stroke='%23202020' stroke-width='2'/%3E%3C/svg%3E") no-repeat center;
}

.check {
    display: flex;
    align-items: center;
    gap: 4px;
}

.search {
    display: flex;
    align-items: center;
    height: 20px;
    padding-left: 2px;
    background: #161616;
    border: 1px solid #2e2e2e;
    border-radius: 3px;
}

.search input {
    flex: 1;
    height: 18px;
}

::placeholder {
    color: inherit;
    opacity: 1;
}

.swatch {
    width: 10px;
    height: 10px;
    display: block;
    flex: none;
}

.tan { background: #ab9776; }
.yellow { background: #e6da4e; }
.red { background: #b33939; }

.active {
    background: #161616;
    border: 1px solid #2e2e2e;
    border-radius: 2px;
}

.active svg {
    color: #2d8ceb;
}

/* window frame */
.titlebar, .menubar {
    display: flex;
    align-items: center;
    background: #fff;
    color: #000;
}

.titlebar {
    height: 22px;
    padding-left: 2px;
    gap: 5px;
}

.app-logo {
    width: 16px;
    height: 16px;
    border-radius: 3px;
    background: #00005b;
    color: #9999ff;
    font-weight: bold;
    font-size: 10px;
    line-height: 15px;
    text-align: center;
}

.window-buttons {
    display: flex;
    margin-left: auto;
    padding-right: 3px;
}

.window-buttons button {
    width: 46px;
}

.window-buttons svg {
    color: #000;
}

.menubar {
    height: 21px;
    padding: 2px 7px 0;
    gap: 12px;
    border-bottom: 2px solid #eef2f0;
    font-size: 12px;
}

/* toolbar */
.toolbar {
    height: 25px;
    display: flex;
    background: #232323;
}

.toolbar > div, .workspaces {
    display: flex;
    align-items: center;
}

.toolbar .tools {
    width: 454px;
    padding-left: 4px;
    border-right: 2px solid #303030;
}

.grip {
    width: 3px;
    height: 20px;
    margin-right: 4px;
    background: repeating-linear-gradient(#404040 0 1px, transparent 1px 2px);
}

.tools button {
    width: 25px;
    height: 23px;
}

.tools i {
    width: 7px;
    height: 21px;
    border: solid #232323;
    border-width: 0 3px 0 2px;
    background: #303030;
}

.tools .dim svg {
    color: #555;
}

.axes {
    padding: 0 6px 0 19px;
}

.axes button {
    width: 23px;
    height: 21px;
}

.axes svg, .snapping svg {
    width: 18px;
    height: 18px;
}

.axes svg {
    color: #424242;
}

.axes .active {
    background: none;
}

.axes .active svg {
    color: #1c3c5e;
}

.snapping {
    gap: 6px;
    padding-left: 6px;
    border-left: 2px solid #303030;
}

.workspaces {
    margin-left: auto;
    gap: 44px;
    padding: 0 5px 0 22px;
    border-left: 2px solid #303030;
    color: #8a8a8a;
}

.workspaces a {
    padding-top: 2px;
}

.workspaces .current {
    display: flex;
    align-items: center;
    gap: 8px;
    color: #2d8ceb;
    margin-right: -26px;
}

.workspaces .current svg {
    color: #2d8ceb;
}

.workspaces button {
    margin-left: -9px;
}

.help {
    padding: 0 4px 0 5px;
    gap: 11px;
    border-left: 2px solid #303030;
}

.help .search {
    width: 195px;
    gap: 5px;
    color: #b4b4b4;
}

/* docks */
.docks {
    flex: 1;
    min-height: 0;
    display: flex;
    padding: 2px 0 5px 1px;
}

.panel {
    background: #232323;
}

.project {
    width: 320px;
    display: flex;
    flex-direction: column;
}

h2 {
    height: 27px;
    display: flex;
    align-items: center;
}

.project h2 {
    padding-left: 13px;
    gap: 4px;
    color: #b4b4b4;
}

.item-info {
    display: flex;
    gap: 5px;
    height: 112px;
    padding: 5px 6px 0;
    color: #a8a8a8;
}

.thumb {
    width: 114px;
    height: 65px;
    margin-top: 2px;
    background: #2d2d2d;
    border: 1px solid #000;
}

.item-info b {
    display: flex;
    align-items: center;
    gap: 5px;
    font-weight: 600;
}

.caret {
    border: 4px solid transparent;
    border-top: 5px solid #fff;
    border-bottom: 0;
}

.project .search {
    margin: 0 6px 6px;
    padding-left: 4px;
}

table {
    border-collapse: collapse;
    table-layout: fixed;
    width: 100%;
}

th, td {
    padding: 0;
    text-align: left;
    font-weight: normal;
    white-space: nowrap;
}

.cell {
    display: flex;
    align-items: center;
}

.items th {
    height: 19px;
    padding-left: 6px;
    border: solid #000;
    border-width: 1px 0;
    background: #313131 linear-gradient(#111, #111) no-repeat left center / 1px 11px;
    color: #a8a8a8;
    font-size: 10px;
}

.items svg {
    height: 17px;
}

.items th svg {
    margin-left: -3px;
}

.items .name {
    padding-left: 22px;
    background-position: 16px center;
}

.sort {
    float: right;
    margin: 4px 3px 0;
    border: 6px solid transparent;
    border-bottom: 5px solid #2d8ceb;
    border-top: 0;
}

.items td {
    height: 19px;
    border-bottom: 1px solid #202020;
    background: #272727;
}

.items .selected td {
    background: #313131;
}

.items td:nth-child(3) {
    padding-left: 8px;
}

.items td.end {
    background: #232323;
}

.indent, .items .twirl {
    width: 14px;
}

.item-name {
    flex: 1;
    padding: 2px 3px 3px 2px;
}

.selected .item-name {
    background: #9f9f9f;
    color: #141414;
}

.items .swatch {
    margin-left: 6px;
    outline: 1px solid #111;
}

.c-name { width: 118px; }
.c-tag { width: 22px; }
.c-type { width: 77px; }
.c-size { width: 48px; }
.c-rate { width: 37px; }

.items .num {
    text-align: right;
    padding-right: 5px;
}

.project-bar {
    margin-top: auto;
    height: 18px;
    display: flex;
    align-items: center;
    gap: 5px;
    padding: 0 18px 0 2px;
    border-top: 1px solid #000;
}

.project-bar .depth {
    width: 46px;
    height: 16px;
    border: 1px solid #2e2e2e;
    border-radius: 3px;
    font-size: 10px;
}

.project-bar .delete {
    width: 16px;
}

.hscroll {
    flex: 1;
    background: #1e1e1e;
}

.hscroll span {
    display: block;
    width: 41px;
    height: 15px;
    border-radius: 8px;
    background: #323232;
}

.viewer {
    flex: 1;
    min-width: 0;
    margin: 0 5px 0 4px;
    display: flex;
    flex-direction: column;
}

.viewer h2 {
    padding-left: 4px;
}

.viewer h2 .swatch {
    margin: 0 5px 0 2px;
}

.viewer h2 strong {
    font-weight: normal;
    color: #d8d8d8;
    margin: 0 3px 0 4px;
}

.crumb {
    align-self: flex-start;
    width: 71px;
    margin: 2px 0 5px 20px;
    padding: 2px 8px;
    background: #161616;
    border: 1px solid #2e2e2e;
    border-radius: 3px;
    color: #2d8ceb;
}

.canvas {
    flex: 1;
    margin-left: 1px;
    background: #000;
    border-top: 1px solid #3a3a3a;
    border-bottom: 1px solid #303030;
}

.viewer-bar {
    height: 21px;
    display: flex;
    align-items: center;
    padding-left: 1px;
    overflow: hidden;
}

.viewer-bar button {
    width: 22px;
    height: 20px;
}

.viewer-bar select {
    margin: 0 1px;
}

.viewer-bar svg {
    width: 18px;
    height: 18px;
}

.viewer-bar .timecode {
    width: 70px;
    border: 1px solid #303030;
    border-radius: 3px;
}

.viewer-bar .faint svg {
    color: #3c3c3c;
}

.viewer-bar .exposure {
    width: 24px;
    border-left: 1px solid #333;
    margin-right: 3px;
}

.w-zoom { width: 68px; }
.w-res { width: 86px; }
.w-cam { width: 105px; }
.w-view { width: 68px; }

/* right side */
.side {
    width: 219px;
    display: flex;
    gap: 1px;
    overflow: hidden;
}

.side-panels {
    flex: 1;
}

.side h3 {
    height: 28px;
    display: flex;
    align-items: center;
    justify-content: space-between;
    padding: 0 4px 1px 13px;
}

.side .panel {
    border-bottom: 2px solid #161616;
}

.side .open {
    color: #b4b4b4;
}

.vscroll {
    width: 12px;
    margin: 1px 1px 6px 0;
    border-radius: 6px;
    background: #303030;
}

.preview {
    display: flex;
    flex-direction: column;
    padding: 0 5px 6px 6px;
}

.preview h3 {
    margin: 0 -5px 0 -6px;
}

.transport {
    display: flex;
    justify-content: center;
    gap: 4px;
    padding: 4px 6px 4px 0;
    margin-bottom: 4px;
    border-bottom: 2px solid #303030;
}

.preview label {
    padding: 0 0 4px 1px;
}

.preview .check {
    padding: 2px 0;
    height: 18px;
}

.row {
    display: flex;
    align-items: center;
}

.row select {
    flex: 1;
    margin-right: 6px;
}

.include {
    height: 26px;
    gap: 4px;
}

.include span {
    flex: 1;
    padding-left: 1px;
}

.include button {
    width: 20px;
    height: 20px;
}

.include .loop {
    width: 26px;
    border-left: 2px solid #303030;
    justify-content: flex-end;
}

.preview .spaced {
    margin-top: 7px;
}

.preview > select {
    margin-bottom: 4px;
    height: 19px;
}

.rates {
    display: grid;
    grid-template-columns: 65px 42px 73px;
    column-gap: 5px;
    margin-bottom: 2px;
}

.rates select {
    padding-left: 6px;
    height: 19px;
}

.rates .combo {
    padding-right: 0;
    background: var(--chevron) no-repeat right 4px center, linear-gradient(to left, #1c1c1c 17px, #303030 17px 18px, #161616 18px);
}

.stop {
    margin-top: 2px;
    padding: 5px 1px 3px;
    border-top: 2px solid #303030;
}

/* timeline */
.timeline {
    height: 346px;
    margin: 0 1px 1px;
    display: flex;
    flex-direction: column;
    background: #232323;
    border: 1px solid #2d8ceb;
}

.timeline h2 {
    height: 26px;
    padding: 0 0 1px 3px;
    color: #b4b4b4;
}

.timeline h2 .swatch {
    margin: 0 12px 0 2px;
}

.time-body {
    flex: 1;
    min-height: 0;
    display: flex;
}

.layers {
    width: 533px;
    border-bottom: 1px solid #000;
    border-right: 1px solid #000;
}

.time-controls {
    height: 36px;
    display: flex;
    align-items: center;
    padding: 0 13px 0 9px;
}

.clock {
    flex: none;
    width: 96px;
    line-height: 14px;
    color: #1d5896;
}

.clock b {
    display: block;
    padding-left: 6px;
    font-size: 15px;
    line-height: 18px;
    color: #2d8ceb;
}

.time-controls .search {
    flex: 1;
    margin-right: 14px;
}

.time-controls > button {
    margin-right: 14px;
}

.time-controls > button:last-child {
    margin: 0 0 0 14px;
}

.trio {
    display: flex;
    gap: 6px;
}

.layer-table th {
    height: 18px;
    padding-left: 6px;
    border: solid #000;
    border-width: 1px 0;
    background: #2d2d2d linear-gradient(#111, #111) no-repeat left center / 1px 11px;
    color: #a8a8a8;
    font-size: 10px;
}

.layer-table th:first-child {
    background-size: 0 0;
}

.layer-table td {
    height: 18px;
    padding-left: 4px;
    background: #313131;
    border-bottom: 1px solid #292929;
}

.layer-table svg {
    width: 18px;
    height: 17px;
}

.layer-table th:first-child, .layer-table td:first-child {
    padding-left: 3px;
}

.layer-table td:nth-child(2) {
    padding-left: 0;
}

.layer-table .tag {
    padding-left: 11px;
}

.l-av { width: 67px; }
.l-tag { width: 32px; }
.l-num { width: 33px; }
.l-source { width: 131px; }
.l-switch { width: 137px; }

/* one 15px slot per switch */
.slots {
    display: grid;
    grid-auto-flow: column;
    grid-auto-columns: 15px;
    align-items: center;
    justify-items: center;
    justify-content: start;
}

.slots .off {
    width: 13px;
    height: 13px;
    background: #232323;
}

.layer-table th:nth-child(5), .layer-table td:nth-child(5) {
    padding-left: 3px;
}

.layer-table td:last-child {
    padding-left: 2px;
}

.fx {
    font: italic 13px/14px "Liberation Serif", serif;
    color: #b4b4b4;
}

.layer-table .swatch {
    width: 12px;
    height: 12px;
}

.layer-table .index {
    padding-left: 7px;
    color: #b4b4b4;
}

.layer-name {
    gap: 6px;
    color: #b4b4b4;
}

.solid {
    width: 13px;
    height: 13px;
    border: 1px solid #000;
    background: #2a2a2a;
}

.parent {
    gap: 3px;
}

.parent select {
    width: 89px;
    height: 15px;
    border: 0;
    border-radius: 0;
}

.tracks {
    flex: 1;
    min-width: 0;
    position: relative;
    overflow: hidden;
    display: flex;
    flex-direction: column;
    padding-top: 6px;
}

/* navigator and work area share the two end handles */
.navigator, .workarea {
    display: flex;
    border: solid #000;
    border-width: 1px 0;
}

.navigator {
    height: 10px;
}

.navigator > div, .workarea > div {
    flex: 1;
    background: #686868;
}

.workarea > div {
    background: #606060;
    border-top: 1px solid #757575;
}

.handle {
    width: 5px;
    margin: 0 1px 0 0;
    border-radius: 5px 0 0 5px;
    background: #2d8ceb;
}

.handle.right {
    margin: 0 1px;
    border-radius: 0 5px 5px 0;
}

.ruler {
    height: 19px;
    display: flex;
    justify-content: space-between;
    padding: 0 7px 0 6px;
}

.ruler li {
    width: 0;
    display: flex;
    flex-direction: column;
    align-items: center;
    font-size: 10px;
    line-height: 14px;
    white-space: nowrap;
}

.ruler li::after {
    content: "";
    width: 1px;
    height: 5px;
    background: #9a9a9a;
}

.workarea {
    height: 17px;
}

.cached, .layer-bar, .track-empty {
    margin: 0 7px 0 6px;
}

.cached div {
    height: 3px;
    background: #16bd22;
}

.layer-bar {
    border-top: 1px solid #000;
    border-bottom: 1px solid #292929;
}

.layer-bar div {
    height: 16px;
    background: #7b3a3a;
    border: 1px solid #8f4848;
    border-bottom-color: #552626;
}

.track-empty {
    flex: 1;
    background: #313131;
}

.scrub {
    position: absolute;
    top: 7px;
    bottom: 0;
    left: 6px;
    right: 7px;
}

/* short mark on the navigator, then the line below the handle */
.playhead {
    position: absolute;
    top: 0;
    bottom: 0;
    width: 1px;
    background:
        linear-gradient(#2d8ceb, #2d8ceb) no-repeat 0 0 / 1px 8px,
        linear-gradient(transparent 26px, #2d8ceb 26px);
}

.playhead svg {
    width: 12px;
    height: 13px;
    margin: 14px 0 0 -6px;
}

.gutter {
    width: 17px;
    padding-top: 36px;
    border-left: 1px solid #161616;
}

.gutter svg {
    width: 16px;
    height: 19px;
}

.time-footer {
    height: 17px;
    display: flex;
    align-items: center;
    padding-left: 2px;
}

.time-footer svg {
    width: 18px;
    height: 16px;
}

.time-footer .active {
    border: 0;
}

.time-footer .toggle {
    width: 134px;
    height: 16px;
    margin: 0 134px 0 209px;
    border: 1px solid #1a1a1a;
    border-radius: 3px;
    background: #1e1e1e;
}

.time-zoom {
    display: flex;
    align-items: center;
    gap: 8px;
}

.time-zoom input {
    appearance: none;
    width: 50px;
    height: 2px;
    background: #3c3c3c;
}

.time-zoom input::-webkit-slider-thumb {
    appearance: none;
    width: 10px;
    height: 10px;
    border: 2px solid #9a9a9a;
    border-radius: 5px;
    background: #232323;
}

/* desktop taskbar */
.taskbar {
    height: 40px;
    display: flex;
    background: #1c1c1c;
    color: #fff;
}

.taskbar svg {
    color: #fff;
}

.taskbar svg.big {
    width: 24px;
    height: 24px;
}

.start {
    width: 48px;
}

.task-search {
    width: 344px;
    margin: 1px 1px 0 0;
    display: flex;
    align-items: center;
    gap: 10px;
    padding-left: 10px;
    background: #f1f1f1;
    color: #333;
    font-size: 14px;
}

.taskbar .task-search svg {
    color: #111;
}

.task-search input {
    flex: 1;
}

.task {
    width: 49px;
    border-bottom: 2px solid transparent;
}

.running {
    border-image: linear-gradient(to right, transparent 4px, #76b9ed 4px 45px, transparent 45px) 2;
}

.task.current {
    background: #474747;
    border-color: #76b9ed;
}

.task .app-logo {
    width: 22px;
    height: 22px;
    font-size: 13px;
    line-height: 20px;
}

.tray {
    margin: 0 4px 0 auto;
    display: flex;
    align-items: center;
    gap: 4px;
    padding-right: 18px;
    border-right: 1px solid #5a5a5a;
}

.tray span {
    padding-left: 4px;
    font-size: 12px;
}

.tray time {
    padding: 0 12px 0 8px;
    text-align: center;
    line-height: 18px;
}
```
